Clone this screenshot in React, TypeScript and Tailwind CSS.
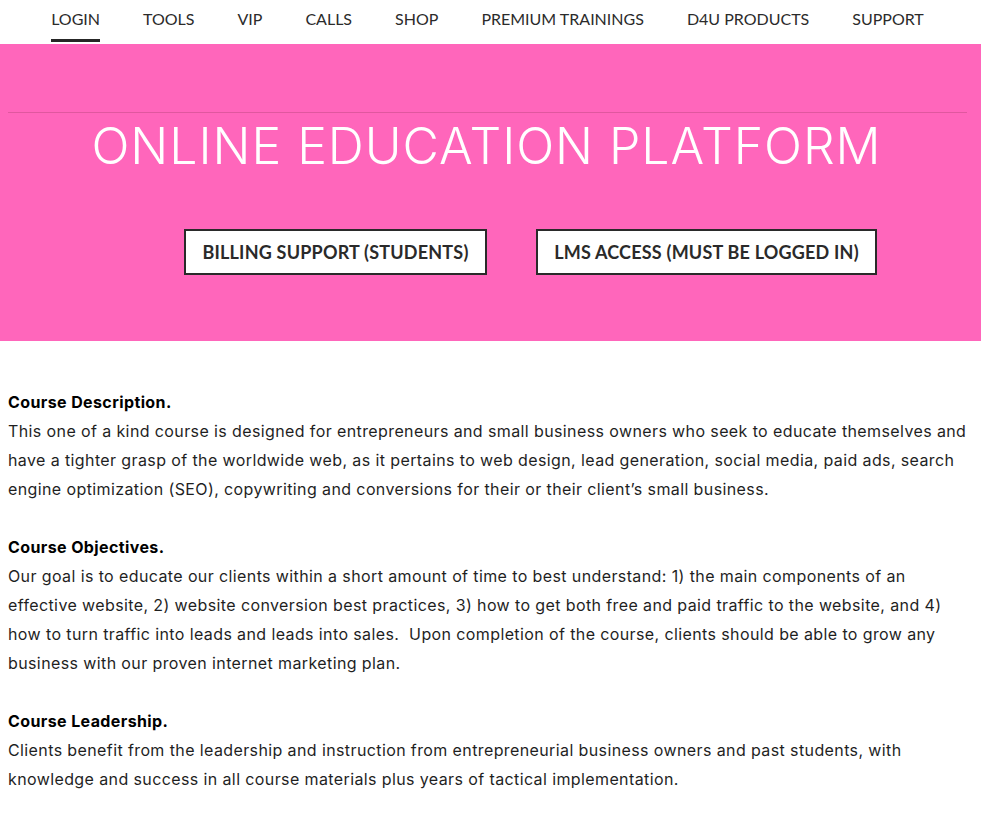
import React from "react";

const navItems = ["LOGIN", "TOOLS", "VIP", "CALLS", "SHOP", "PREMIUM TRAININGS", "D4U PRODUCTS", "SUPPORT"];

const sections = [
  {
    title: "Course Description.",
    lines: [
      "This one of a kind course is designed for entrepreneurs and small business owners who seek to educate themselves and",
      "have a tighter grasp of the worldwide web, as it pertains to web design, lead generation, social media, paid ads, search",
      "engine optimization (SEO), copywriting and conversions for their or their client\u2019s small business.",
    ],
  },
  {
    title: "Course Objectives.",
    lines: [
      "Our goal is to educate our clients within a short amount of time to best understand: 1) the main components of an",
      "effective website, 2) website conversion best practices, 3) how to get both free and paid traffic to the website, and 4)",
      "how to turn traffic into leads and leads into sales.\u00a0 Upon completion of the course, clients should be able to grow any",
      "business with our proven internet marketing plan.",
    ],
  },
  {
    title: "Course Leadership.",
    lines: [
      "Clients benefit from the leadership and instruction from entrepreneurial business owners and past students, with",
      "knowledge and success in all course materials plus years of tactical implementation.",
    ],
  },
];

export default function App() {
  return (
    <div className="min-h-[813px] bg-white">
      <nav className="h-[44px] bg-white flex justify-center pr-[6px] gap-[43px] font-['Lato',sans-serif] text-[16px] text-[#2b2b2b]">
        {navItems.map((item, i) => (
          <div key={item} className="h-[44px] flex items-start">
            <span
              className={
                "block leading-[18px] mt-[10px] pb-[11px] whitespace-nowrap " +
                (i === 0 ? "border-b-[3px] border-[#262626]" : "border-b-[3px] border-transparent")
              }
            >
              {item}
            </span>
          </div>
        ))}
      </nav>

      <section className="h-[297px] bg-[#ff66bb] pt-[68px] px-[8px]">
        <div className="border-t border-[#e0579f] w-[959px]" />
        <h1 className="mt-[3px] text-center pr-[8px] text-white font-['Inter',sans-serif] font-light text-[50px] leading-[60px] tracking-[0.95px] whitespace-nowrap">
          ONLINE EDUCATION PLATFORM
        </h1>
        <div className="mt-[53px] flex pl-[176px] gap-[49px] font-['Lato',sans-serif] font-bold text-[18px] text-[#2a2a2a] tracking-[0.2px]">
          <div className="w-[303px] h-[46px] border-2 border-[#2a2a2a] bg-white flex items-center justify-center whitespace-nowrap">
            BILLING SUPPORT (STUDENTS)
          </div>
          <div className="w-[341px] h-[46px] border-2 border-[#2a2a2a] bg-white flex items-center justify-center whitespace-nowrap">
            LMS ACCESS (MUST BE LOGGED IN)
          </div>
        </div>
      </section>

      <main className="pt-[47px] px-[8px] font-['Inter',sans-serif] text-[16px] leading-[29px] text-[#1f1f1f] tracking-[0.39px]">
        {sections.map((s, idx) => (
          <div key={s.title} className={idx > 0 ? "mt-[29px]" : ""}>
            <div className="font-bold text-black">{s.title}</div>
            {s.lines.map((l) => (
              <div key={l} className="whitespace-nowrap">
                {l}
              </div>
            ))}
          </div>
        ))}
      </main>
    </div>
  );
}
